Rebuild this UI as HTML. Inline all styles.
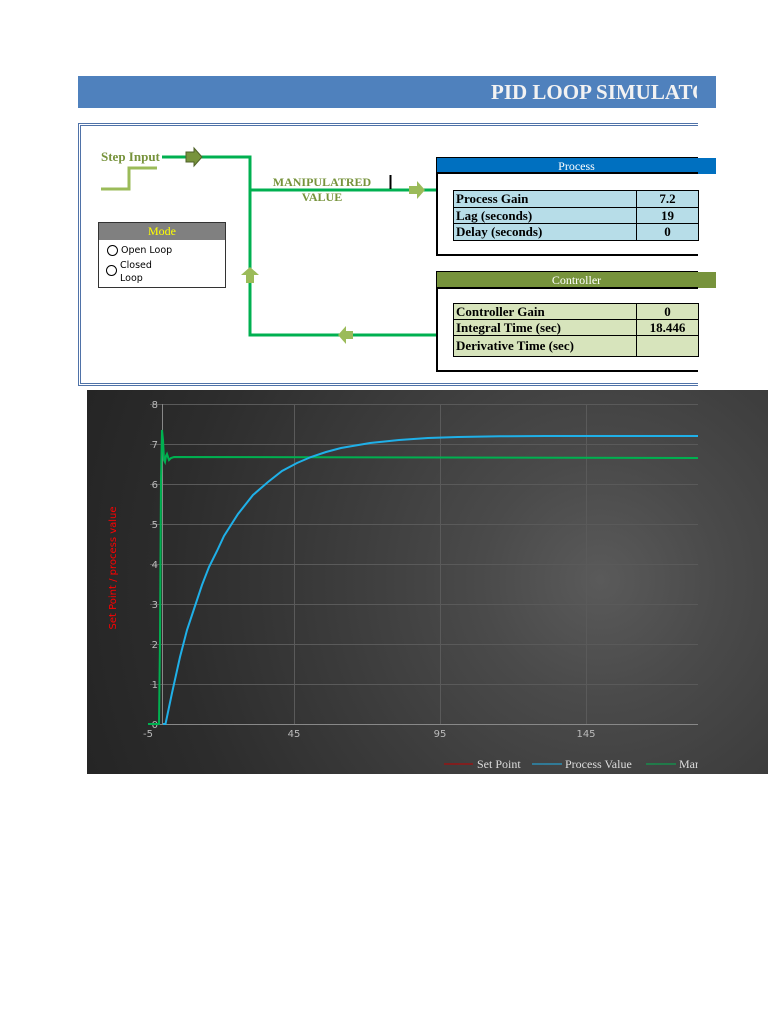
<!DOCTYPE html>
<html><head><meta charset="utf-8"><style>
body{margin:0;width:768px;height:1024px;background:#fff;position:relative;overflow:hidden;font-family:"Liberation Serif",serif}
.a{position:absolute}
td{box-sizing:border-box;line-height:14px;padding:0 2px}
</style></head><body>
<div class="a" style="left:78px;top:76px;width:638px;height:32px;background:#4f81bd"></div>
<div class="a" style="left:491px;top:78px;width:206px;height:28px;overflow:hidden;color:#f2f2f2;font-weight:bold;font-size:21px;line-height:28px;white-space:nowrap">PID LOOP SIMULATOR</div>
<div class="a" style="left:78px;top:123px;width:620px;height:263px;border:3px double #4f72a8;border-right:none;box-sizing:border-box"></div>
<svg class="a" style="left:0;top:0" width="768" height="400">
<g stroke="#00b050" stroke-width="3" fill="none">
<polyline points="162,157 250,157 250,335 437,335"/>
<line x1="250" y1="190" x2="437" y2="190"/>
</g>
<polyline points="101,189 129,189 129,168 157,168" stroke="#9bbb59" stroke-width="3" fill="none"/>
<path d="M186,152 h8 v-4 l8,9 l-8,9 v-4 h-8z" fill="#77933c" stroke="#4f6228" stroke-width="1"/>
<path d="M409,186 h8 v-5 l8,9 l-8,9 v-5 h-8z" fill="#9bbb59"/>
<path d="M353,331 h-7 v-5 l-8,9 l8,9 v-5 h7z" fill="#9bbb59"/>
<path d="M246,283 v-8 h-5 l9,-8 l9,8 h-5 v8z" fill="#9bbb59"/>
<line x1="390.5" y1="175" x2="390.5" y2="189" stroke="#000" stroke-width="2"/>
</svg>
<div class="a" style="left:101px;top:149px;color:#77933c;font-weight:bold;font-size:13px">Step Input</div>
<div class="a" style="left:262px;top:175px;width:120px;text-align:center;color:#77933c;font-weight:bold;font-size:12px;line-height:15px">MANIPULATRED<br>VALUE</div>
<div class="a" style="left:98px;top:222px;width:128px;height:66px;border:1px solid #333;box-sizing:border-box;background:#fff;font-family:'DejaVu Sans',sans-serif;font-size:9.5px">
<div style="background:#808080;color:#ffff00;text-align:center;font-family:'Liberation Serif',serif;font-size:12px;height:17px;line-height:17px">Mode</div>
<div style="position:absolute;left:8px;top:22px;width:9px;height:9px;border:1px solid #000;border-radius:50%"></div>
<div style="position:absolute;left:22px;top:22px">Open Loop</div>
<div style="position:absolute;left:7px;top:42px;width:9px;height:9px;border:1px solid #000;border-radius:50%"></div>
<div style="position:absolute;left:21px;top:36px;line-height:13px">Closed<br>Loop</div>
</div>
<!-- Process -->
<div class="a" style="left:436px;top:157px;width:262px;height:99px;border:2px solid #000;border-right:none;box-sizing:border-box"></div>
<div class="a" style="left:437px;top:158px;width:279px;height:16px;background:#0070c0;color:#fff;font-size:12px;line-height:16px;text-align:center">Process</div>
<div class="a" style="left:437px;top:172px;width:261px;height:2px;background:#000"></div>
<table class="a" style="left:453px;top:190px;border-collapse:collapse;font-size:13px;font-weight:bold;background:#b7dde8">
<tr><td style="border:1px solid #000;width:183px;height:17px">Process Gain</td><td style="border:1px solid #000;width:62px;text-align:center">7.2</td></tr>
<tr><td style="border:1px solid #000;height:16px">Lag (seconds)</td><td style="border:1px solid #000;text-align:center">19</td></tr>
<tr><td style="border:1px solid #000;height:17px">Delay (seconds)</td><td style="border:1px solid #000;text-align:center">0</td></tr>
</table>
<!-- Controller -->
<div class="a" style="left:436px;top:271px;width:262px;height:101px;border:2px solid #000;border-right:none;box-sizing:border-box"></div>
<div class="a" style="left:437px;top:272px;width:279px;height:16px;background:#77933c;color:#fff;font-size:12px;line-height:16px;text-align:center">Controller</div>
<div class="a" style="left:437px;top:287px;width:261px;height:2px;background:#000"></div>
<table class="a" style="left:453px;top:303px;border-collapse:collapse;font-size:13px;font-weight:bold;background:#d7e4bc">
<tr><td style="border:1px solid #000;width:183px;height:16px">Controller Gain</td><td style="border:1px solid #000;width:62px;text-align:center">0</td></tr>
<tr><td style="border:1px solid #000;height:16px">Integral Time (sec)</td><td style="border:1px solid #000;text-align:center">18.446</td></tr>
<tr><td style="border:1px solid #000;height:21px">Derivative Time (sec)</td><td style="border:1px solid #000"></td></tr>
</table>
<!-- Chart -->
<div class="a" style="left:87px;top:390px;width:681px;height:384px;background:radial-gradient(circle at 513px 190px,#5a5a5a 0,#4a4a4a 120px,#3c3c3c 260px,#2c2c2c 430px,#242424 560px)"></div>
<svg class="a" style="left:0;top:0" width="768" height="1024" font-family="DejaVu Sans,sans-serif">
<g stroke="#5a5a5a" stroke-width="1">
<line x1="150" y1="404.5" x2="698" y2="404.5"/><line x1="150" y1="444.5" x2="698" y2="444.5"/>
<line x1="150" y1="484.5" x2="698" y2="484.5"/><line x1="150" y1="524.5" x2="698" y2="524.5"/>
<line x1="150" y1="564.5" x2="698" y2="564.5"/><line x1="150" y1="604.5" x2="698" y2="604.5"/>
<line x1="150" y1="644.5" x2="698" y2="644.5"/><line x1="150" y1="684.5" x2="698" y2="684.5"/>
<line x1="294.5" y1="404" x2="294.5" y2="724"/><line x1="440.5" y1="404" x2="440.5" y2="724"/><line x1="586.5" y1="404" x2="586.5" y2="724"/>
</g>
<line x1="162.5" y1="404" x2="162.5" y2="724" stroke="#888"/>
<line x1="148" y1="724.5" x2="698" y2="724.5" stroke="#888"/>
<g fill="#bbb" font-size="10" text-anchor="end">
<text x="158" y="408">8</text><text x="158" y="448">7</text><text x="158" y="488">6</text><text x="158" y="528">5</text>
<text x="158" y="568">4</text><text x="158" y="608">3</text><text x="158" y="648">2</text><text x="158" y="688">1</text><text x="158" y="728">0</text>
</g>
<g fill="#bbb" font-size="10" text-anchor="middle">
<text x="148" y="737">-5</text><text x="294" y="737">45</text><text x="440" y="737">95</text><text x="586" y="737">145</text>
</g>
<text transform="translate(116,568) rotate(-90)" fill="#ff0000" font-size="10" text-anchor="middle">Set Point / process value</text>
<polyline fill="none" stroke="#00b050" stroke-width="2" points="148,724 159,724 160,640 161,480 162,430 163,440 164,460 165,462 166,456 167,454 169,460 171,458 174,457 698,458"/>
<polyline fill="none" stroke="#1fb0e8" stroke-width="2" points="163,724 165.5,724 172,693 180,657 187,630 195,606 202,585 209,567 217,551 224,536 238,514 253,495 268,482 282,471 297,463 311,457 326,452 341,448 370,443 399,440 428,438 458,437 500,436.3 545,436 698,436"/>
<g font-family="Liberation Serif,serif" font-size="12" fill="#ddd">
<line x1="444" y1="764" x2="473" y2="764" stroke="#c00000"/><text x="477" y="768">Set Point</text>
<line x1="532" y1="764" x2="562" y2="764" stroke="#1fb0e8"/><text x="565" y="768">Process Value</text>
<line x1="646" y1="764" x2="676" y2="764" stroke="#00b050"/>
</g>
<svg x="679" y="750" width="19" height="25"><text x="0" y="18" font-family="Liberation Serif,serif" font-size="12" fill="#ddd">Manipulated</text></svg>
</svg>
</body></html>
